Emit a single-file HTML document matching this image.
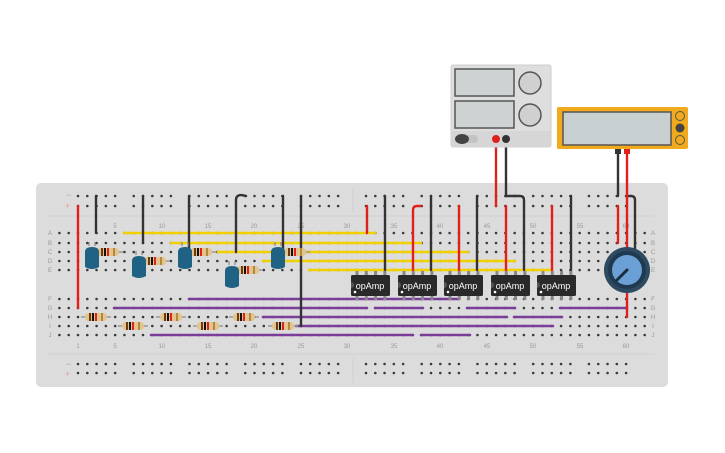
<!DOCTYPE html>
<html><head><meta charset="utf-8">
<style>
html,body{margin:0;padding:0;background:#fff;width:725px;height:453px;overflow:hidden}
svg{display:block}
text{font-family:"Liberation Sans",sans-serif}
</style></head>
<body>
<svg id="s" width="725" height="453" viewBox="0 0 725 453" xmlns="http://www.w3.org/2000/svg">
<!-- breadboard -->
<rect x="36" y="183" width="632" height="204" rx="5" fill="#dcdcdc"/>
<line x1="48" y1="216" x2="655" y2="216" stroke="#cfcfcf" stroke-width="1"/>
<line x1="48" y1="354" x2="655" y2="354" stroke="#cfcfcf" stroke-width="1"/>
<line x1="353" y1="188" x2="353" y2="212" stroke="#cfcfcf"/>
<line x1="353" y1="358" x2="353" y2="383" stroke="#cfcfcf"/>
<g id="dots" fill="#3a3a3a"></g>
<g font-size="6" fill="#999">
<text x="66" y="198" fill="#8fb3d9" font-size="9">−</text>
<text x="65" y="209" fill="#e8a0a0" font-size="9">+</text>
<text x="66" y="367" fill="#8fb3d9" font-size="9">−</text>
<text x="65" y="377" fill="#e8a0a0" font-size="9">+</text>
</g>
<g id="labels" font-size="6" fill="#999" text-anchor="middle">
<text x="50" y="235">A</text><text x="50" y="245">B</text><text x="50" y="254">C</text><text x="50" y="263">D</text><text x="50" y="272">E</text>
<text x="50" y="301">F</text><text x="50" y="310">G</text><text x="50" y="319">H</text><text x="50" y="328">I</text><text x="50" y="337">J</text>
<text x="653" y="235">A</text><text x="653" y="245">B</text><text x="653" y="254">C</text><text x="653" y="263">D</text><text x="653" y="272">E</text>
<text x="653" y="301">F</text><text x="653" y="310">G</text><text x="653" y="319">H</text><text x="653" y="328">I</text><text x="653" y="337">J</text>
<text x="115" y="228">5</text><text x="162" y="228">10</text><text x="208" y="228">15</text><text x="254" y="228">20</text><text x="301" y="228">25</text><text x="347" y="228">30</text><text x="394" y="228">35</text><text x="440" y="228">40</text><text x="487" y="228">45</text><text x="533" y="228">50</text><text x="580" y="228">55</text><text x="626" y="228">60</text>
<text x="78" y="348">1</text><text x="115" y="348">5</text><text x="162" y="348">10</text><text x="208" y="348">15</text><text x="254" y="348">20</text><text x="301" y="348">25</text><text x="347" y="348">30</text><text x="394" y="348">35</text><text x="440" y="348">40</text><text x="487" y="348">45</text><text x="533" y="348">50</text><text x="580" y="348">55</text><text x="626" y="348">60</text>
</g>
<!-- yellow wires -->
<g stroke="#f2d000" stroke-width="2.6" stroke-linecap="round">
<line x1="124" y1="233" x2="375" y2="233"/>
<line x1="171" y1="243" x2="421" y2="243"/>
<line x1="218" y1="252" x2="468" y2="252"/>
<line x1="263" y1="261" x2="515" y2="261"/>
<line x1="309" y1="270" x2="552" y2="270"/>
</g>
<!-- purple wires -->
<g stroke="#7a3d99" stroke-width="2.6" stroke-linecap="round">
<line x1="189" y1="299" x2="458" y2="299"/>
<line x1="114" y1="308" x2="367" y2="308"/>
<line x1="375" y1="308" x2="423" y2="308"/>
<line x1="467" y1="308" x2="515" y2="308"/>
<line x1="560" y1="308" x2="627" y2="308"/>
<line x1="263" y1="317" x2="507" y2="317"/>
<line x1="514" y1="317" x2="562" y2="317"/>
<line x1="296" y1="326" x2="553" y2="326"/>
<line x1="151" y1="335" x2="413" y2="335"/>
<line x1="421" y1="335" x2="470" y2="335"/>
</g>
<!-- black wires -->
<g stroke="#333" stroke-width="2.4" fill="none" stroke-linecap="round">
<line x1="96" y1="196" x2="96" y2="233"/>
<line x1="143" y1="196" x2="143" y2="243"/>
<line x1="189" y1="196" x2="189" y2="252"/>
<path d="M246 196 Q236 193 236 200 L236 252"/>
<line x1="283" y1="196" x2="283" y2="261"/>
<line x1="301" y1="196" x2="301" y2="326"/>
<line x1="385" y1="196" x2="385" y2="270"/>
<line x1="431" y1="196" x2="431" y2="270"/>
<line x1="477" y1="196" x2="477" y2="270"/>
<path d="M506 196 L520 196 Q524 196 524 200 L524 270"/>
<line x1="571" y1="196" x2="571" y2="270"/>
<line x1="506" y1="139" x2="506" y2="196"/>
<line x1="618" y1="152" x2="618" y2="196"/>
<path d="M627 196 L631 196 Q635 196 635 200 L635 260"/>
</g>
<!-- red wires -->
<g stroke="#e0201c" stroke-width="2.4" fill="none" stroke-linecap="round">
<line x1="78" y1="206" x2="78" y2="308"/>
<line x1="367" y1="206" x2="367" y2="233"/>
<path d="M421 206 L417 206 Q413 206 413 210 L413 270"/>
<line x1="459" y1="206" x2="459" y2="270"/>
<line x1="506" y1="206" x2="506" y2="270"/>
<line x1="552" y1="206" x2="552" y2="270"/>
<line x1="496" y1="139" x2="496" y2="206"/>
<line x1="618" y1="206" x2="618" y2="243"/>
<line x1="627" y1="152" x2="627" y2="317"/>
</g>
<g id="comp"></g>
<!-- opamps -->
<g id="amps"></g>
<g font-size="9" fill="#fff" text-anchor="middle">
<text x="370" y="289">opAmp</text><text x="417" y="289">opAmp</text><text x="463" y="289">opAmp</text><text x="510" y="289">opAmp</text><text x="556" y="289">opAmp</text>
</g>
<!-- pot -->
<circle cx="627" cy="270" r="23" fill="#2d4a60"/>
<circle cx="627" cy="270" r="19" fill="#1f3a50"/>
<circle cx="627" cy="270" r="15" fill="#6aa0d6"/>
<line x1="627" y1="270" x2="617" y2="280" stroke="#1c2d3c" stroke-width="3" stroke-linecap="round"/>
<!-- power supply -->
<rect x="451" y="65" width="100" height="82" rx="2" fill="#dedede" stroke="#cfcfcf"/>
<rect x="451" y="131" width="100" height="16" fill="#d6d6d6"/>
<rect x="455" y="69" width="59" height="27" fill="#cdd2d3" stroke="#555" stroke-width="1.5"/>
<rect x="455" y="101" width="59" height="27" fill="#cdd2d3" stroke="#555" stroke-width="1.5"/>
<circle cx="530" cy="83" r="11" fill="#d0d0d0" stroke="#555" stroke-width="1.5"/>
<circle cx="530" cy="115" r="11" fill="#d0d0d0" stroke="#555" stroke-width="1.5"/>
<rect x="455" y="135" width="23" height="8" rx="4" fill="#c4c4c4"/>
<ellipse cx="462" cy="139" rx="7" ry="5" fill="#444"/>
<circle cx="496" cy="139" r="4" fill="#e0201c"/>
<circle cx="506" cy="139" r="4" fill="#333"/>
<!-- multimeter -->
<rect x="557" y="107" width="131" height="42" rx="2" fill="#f0aa1c"/>
<rect x="563" y="112" width="108" height="33" fill="#c9d0d2" stroke="#555" stroke-width="1.5"/>
<circle cx="680" cy="116" r="4.5" fill="none" stroke="#555"/>
<circle cx="680" cy="128" r="4.5" fill="#444"/>
<circle cx="680" cy="140" r="4.5" fill="none" stroke="#555"/>
<rect x="615" y="149" width="6" height="5" fill="#333"/>
<rect x="624" y="149" width="6" height="5" fill="#e0201c"/>
</svg>
<script>
var NS="http://www.w3.org/2000/svg";
function el(p,t,a){var e=document.createElementNS(NS,t);for(var k in a)e.setAttribute(k,a[k]);p.appendChild(e);return e;}
var d=document.getElementById('dots');
function cx(c){return 78+(c-1)*9.29;}
var rowsY=[233,243,252,261,270,299,308,317,326,335];
rowsY.forEach(function(y){for(var c=-1;c<=62;c++)el(d,'circle',{cx:cx(c),cy:y,r:1.3});});
var groups=[1,7,13,19,25,32,38,44,50,56];
[196,206,364,373].forEach(function(y){groups.forEach(function(g){for(var i=0;i<5;i++)el(d,'circle',{cx:cx(g+i),cy:y,r:1.3});});});
var comp=document.getElementById('comp');
function res(x,y){
 el(comp,'line',{x1:x-15,y1:y,x2:x+15,y2:y,stroke:'#999','stroke-width':1.5});
 el(comp,'rect',{x:x-11,y:y-4,width:22,height:8,rx:3.5,fill:'#e3c48e'});
 [[-7,'#6b3a10'],[-4,'#111'],[-1,'#e0201c'],[5,'#b08a3a']].forEach(function(b){el(comp,'rect',{x:x+b[0],y:y-4,width:2,height:8,fill:b[1]});});
}
function led(x,y){
 el(comp,'line',{x1:x-3,y1:y-12,x2:x-3,y2:y-16,stroke:'#888','stroke-width':1.2});
 el(comp,'line',{x1:x+3,y1:y-12,x2:x+3,y2:y-16,stroke:'#888','stroke-width':1.2});
 el(comp,'path',{d:'M'+(x-7)+' '+(y+9)+' L'+(x-7)+' '+(y-6)+' Q'+(x-7)+' '+(y-11)+' '+x+' '+(y-11)+' Q'+(x+7)+' '+(y-11)+' '+(x+7)+' '+(y-6)+' L'+(x+7)+' '+(y+9)+' Q'+x+' '+(y+13)+' '+(x-7)+' '+(y+9)+'Z',fill:'#1f6283'});
}
[[108,252],[155,261],[201,252],[248,270],[295,252]].forEach(function(p){res(p[0],p[1]);});
[[92,258],[139,267],[185,258],[232,277],[278,258]].forEach(function(p){led(p[0],p[1]);});
[[96,317],[171,317],[244,317],[133,326],[208,326],[283,326]].forEach(function(p){res(p[0],p[1]);});
var amps=document.getElementById('amps');
[351,398,444,491,537].forEach(function(x){
 for(var i=0;i<4;i++){var px=x+6+i*9.29;el(amps,'rect',{x:px-1.5,y:271,width:3,height:5,fill:'#888'});el(amps,'rect',{x:px-1.5,y:295,width:3,height:5,fill:'#888'});}
 el(amps,'rect',{x:x,y:275,width:39,height:21,rx:1.5,fill:'#2a2a2a'});
 el(amps,'circle',{cx:x+4,cy:292,r:1.3,fill:'#fff'});
 el(amps,'path',{d:'M'+x+' 282 a3 3 0 0 1 0 6z',fill:'#555'});
});
</script>
</body></html>
